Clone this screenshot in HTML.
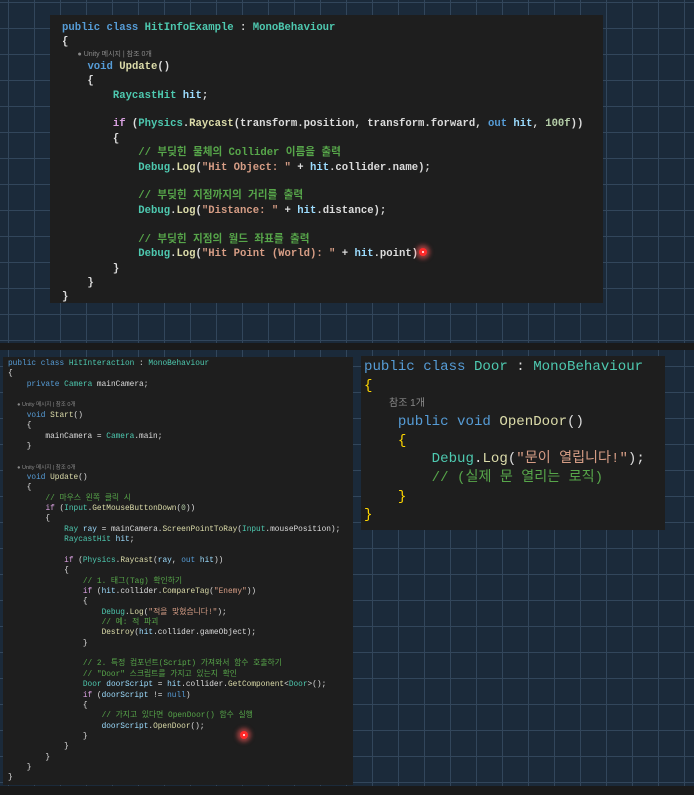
<!DOCTYPE html>
<html><head><meta charset="utf-8"><style>
html,body{margin:0;padding:0}
body{width:694px;height:795px;overflow:hidden;position:relative;background-color:#1b2a3a;
background-image:linear-gradient(#32465b 1px,transparent 1px),linear-gradient(90deg,#32465b 1px,transparent 1px);
background-size:26px 26px;background-position:8px 2px;}
.p{position:absolute;background:#1e1e1e;font-family:"Liberation Mono","Noto Sans CJK KR",monospace;color:#dcdcdc;white-space:pre;}
.l{display:block}
.k{color:#569cd6}.t{color:#4ec9b0}.m{color:#dcdcaa}.s{color:#d69d85}.c{color:#57a64a}.v{color:#9cdcfe}.f{color:#d8a0df}.b{color:#ffd700}.n{color:#b5cea8}
.u{color:#8a8a8a;font-family:"Liberation Sans","Noto Sans CJK KR",sans-serif}
.band{position:absolute;left:0;width:694px;background:#1a1a1a}
.dot{position:absolute;width:8px;height:8px;border-radius:50%;background:#ff2a2a;box-shadow:0 0 4px 3px rgba(255,90,90,.55)}
.dot:after{content:"";position:absolute;left:3px;top:3px;width:2px;height:2px;background:#fff;border-radius:50%}
</style></head><body>
<div class="band" style="top:343px;height:7px"></div>
<div class="band" style="top:786px;height:9px"></div>

<div class="p" style="left:50px;top:15px;width:553px;height:288px;font-size:10.6px;padding:6px 0 0 12px;box-sizing:border-box;font-weight:bold"><span class="l" style="line-height:14.4px"><span class="k">public class</span> <span class="t">HitInfoExample</span> : <span class="t">MonoBehaviour</span></span><span class="l" style="line-height:14.4px">{</span><span class="l u" style="line-height:10px;font-size:7px;font-weight:normal">        ● Unity 메시지 | 참조 0개</span><span class="l" style="line-height:14.4px">    <span class="k">void</span> <span class="m">Update</span>()</span><span class="l" style="line-height:14.4px">    {</span><span class="l" style="line-height:14.4px">        <span class="t">RaycastHit</span> <span class="v">hit</span>;</span><span class="l" style="line-height:14.4px"> </span><span class="l" style="line-height:14.4px">        <span class="f">if</span> (<span class="t">Physics</span>.<span class="m">Raycast</span>(transform.position, transform.forward, <span class="k">out</span> <span class="v">hit</span>, <span class="n">100f</span>))</span><span class="l" style="line-height:14.4px">        {</span><span class="l c" style="line-height:14.4px">            // 부딪힌 물체의 Collider 이름을 출력</span><span class="l" style="line-height:14.4px">            <span class="t">Debug</span>.<span class="m">Log</span>(<span class="s">"Hit Object: "</span> + <span class="v">hit</span>.collider.name);</span><span class="l" style="line-height:14.4px"> </span><span class="l c" style="line-height:14.4px">            // 부딪힌 지점까지의 거리를 출력</span><span class="l" style="line-height:14.4px">            <span class="t">Debug</span>.<span class="m">Log</span>(<span class="s">"Distance: "</span> + <span class="v">hit</span>.distance);</span><span class="l" style="line-height:14.4px"> </span><span class="l c" style="line-height:14.4px">            // 부딪힌 지점의 월드 좌표를 출력</span><span class="l" style="line-height:14.4px">            <span class="t">Debug</span>.<span class="m">Log</span>(<span class="s">"Hit Point (World): "</span> + <span class="v">hit</span>.point)</span><span class="l" style="line-height:14.4px">        }</span><span class="l" style="line-height:14.4px">    }</span><span class="l" style="line-height:14.4px">}</span></div>

<div class="p" style="left:3px;top:357px;width:350px;height:428px;font-size:7.8px;padding:2px 0 0 5px;box-sizing:border-box;line-height:10.36px"><span class="l"><span class="k">public class</span> <span class="t">HitInteraction</span> : <span class="t">MonoBehaviour</span></span><span class="l">{</span><span class="l">    <span class="k">private</span> <span class="t">Camera</span> mainCamera;</span><span class="l"> </span><span class="l u" style="font-size:5.5px">      ● Unity 메시지 | 참조 0개</span><span class="l">    <span class="k">void</span> <span class="m">Start</span>()</span><span class="l">    {</span><span class="l">        mainCamera = <span class="t">Camera</span>.main;</span><span class="l">    }</span><span class="l"> </span><span class="l u" style="font-size:5.5px">      ● Unity 메시지 | 참조 0개</span><span class="l">    <span class="k">void</span> <span class="m">Update</span>()</span><span class="l">    {</span><span class="l c">        // 마우스 왼쪽 클릭 시</span><span class="l">        <span class="f">if</span> (<span class="t">Input</span>.<span class="m">GetMouseButtonDown</span>(<span class="n">0</span>))</span><span class="l">        {</span><span class="l">            <span class="t">Ray</span> <span class="v">ray</span> = mainCamera.<span class="m">ScreenPointToRay</span>(<span class="t">Input</span>.mousePosition);</span><span class="l">            <span class="t">RaycastHit</span> <span class="v">hit</span>;</span><span class="l"> </span><span class="l">            <span class="f">if</span> (<span class="t">Physics</span>.<span class="m">Raycast</span>(<span class="v">ray</span>, <span class="k">out</span> <span class="v">hit</span>))</span><span class="l">            {</span><span class="l c">                // 1. 태그(Tag) 확인하기</span><span class="l">                <span class="f">if</span> (<span class="v">hit</span>.collider.<span class="m">CompareTag</span>(<span class="s">"Enemy"</span>))</span><span class="l">                {</span><span class="l">                    <span class="t">Debug</span>.<span class="m">Log</span>(<span class="s">"적을 맞혔습니다!"</span>);</span><span class="l c">                    // 예: 적 파괴</span><span class="l">                    <span class="m">Destroy</span>(<span class="v">hit</span>.collider.gameObject);</span><span class="l">                }</span><span class="l"> </span><span class="l c">                // 2. 특정 컴포넌트(Script) 가져와서 함수 호출하기</span><span class="l c">                // "Door" 스크립트를 가지고 있는지 확인</span><span class="l">                <span class="t">Door</span> <span class="v">doorScript</span> = <span class="v">hit</span>.collider.<span class="m">GetComponent</span>&lt;<span class="t">Door</span>&gt;();</span><span class="l">                <span class="f">if</span> (<span class="v">doorScript</span> != <span class="k">null</span>)</span><span class="l">                {</span><span class="l c">                    // 가지고 있다면 OpenDoor() 함수 실행</span><span class="l">                    <span class="v">doorScript</span>.<span class="m">OpenDoor</span>();</span><span class="l">                }</span><span class="l">            }</span><span class="l">        }</span><span class="l">    }</span><span class="l">}</span></div>

<div class="p" style="left:361px;top:356px;width:304px;height:174px;font-size:14.1px;padding:2px 0 0 3px;box-sizing:border-box;line-height:18.7px"><span class="l"><span class="k">public class</span> <span class="t">Door</span> : <span class="t">MonoBehaviour</span></span><span class="l b">{</span><span class="l u" style="font-size:10px;line-height:17.5px">         참조 1개</span><span class="l">    <span class="k">public void</span> <span class="m">OpenDoor</span>()</span><span class="l">    <span class="b">{</span></span><span class="l">        <span class="t">Debug</span>.<span class="m">Log</span>(<span class="s">"문이 열립니다!"</span>);</span><span class="l c">        // (실제 문 열리는 로직)</span><span class="l">    <span class="b">}</span></span><span class="l b">}</span></div>

<div class="dot" style="left:419px;top:248px"></div>
<div class="dot" style="left:240px;top:731px"></div>
</body></html>
